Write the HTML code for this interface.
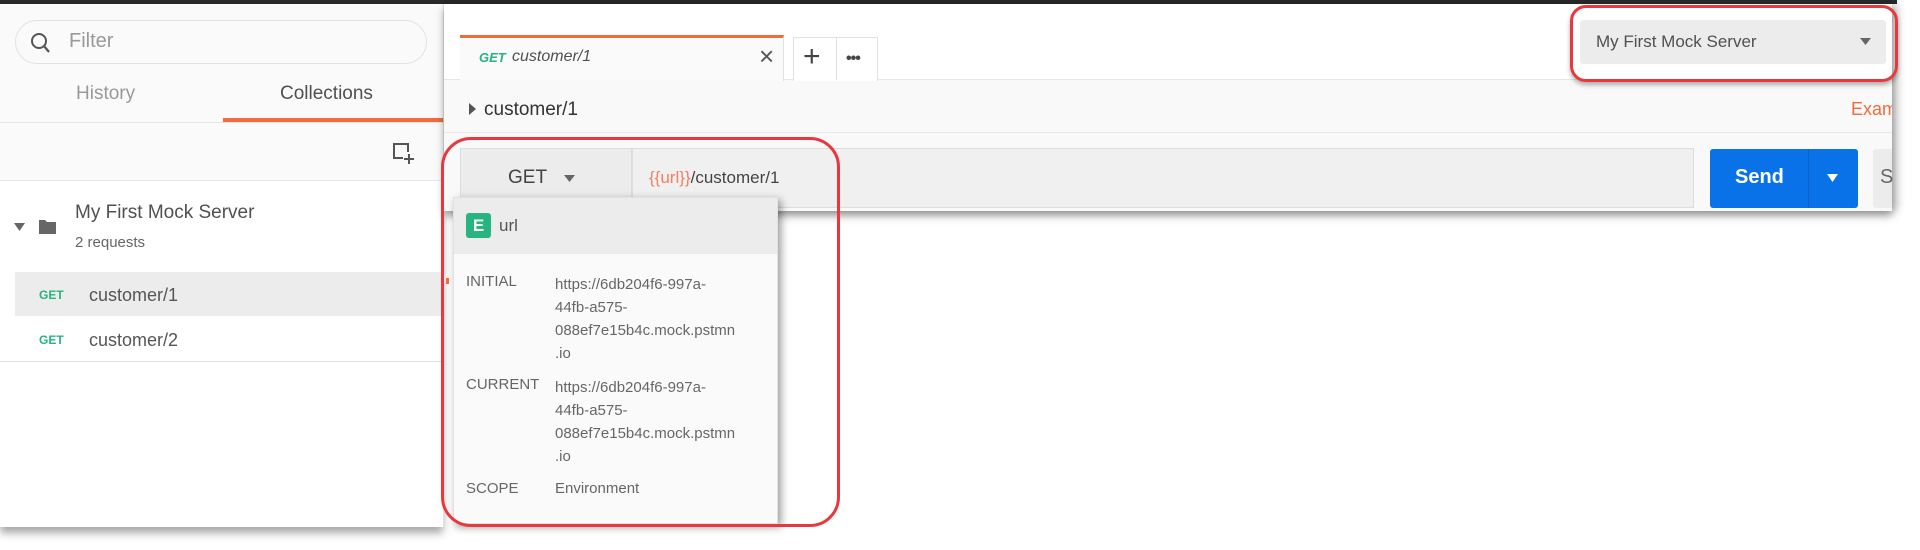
<!DOCTYPE html>
<html><head><meta charset="utf-8"><style>
*{box-sizing:border-box;margin:0;padding:0}
body{width:1920px;height:550px;background:#fff;position:relative;overflow:hidden;font-family:"Liberation Sans",sans-serif;color:#505050}
.a{position:absolute}
</style></head><body>
<div class="a" style="left:0;top:0;width:1897px;height:4px;background:#2a2a2a"></div>
<div class="a" style="left:0;top:4px;width:443px;height:523px;background:#fff;box-shadow:0 6px 8px rgba(0,0,0,.35)"></div>
<div class="a" style="left:0;top:4px;width:443px;height:177px;background:#fafafa;border-bottom:1px solid #e6e6e6"></div>
<div class="a" style="left:443px;top:4px;width:1px;height:523px;background:#e2e2e2"></div>
<div class="a" style="left:15px;top:20px;width:412px;height:44px;border:1px solid #e2e2e2;border-radius:22px;background:#fafafa"></div>
<svg class="a" style="left:30px;top:32px" width="22" height="24" viewBox="0 0 22 24"><circle cx="9" cy="9" r="7" fill="none" stroke="#555" stroke-width="2"/><path d="M14 14l5 6" stroke="#555" stroke-width="2.2"/></svg>
<div class="a" style="left:69px;top:30px;font-size:20px;color:#999">Filter</div>
<div class="a" style="left:76px;top:83px;font-size:19px;color:#999">History</div>
<div class="a" style="left:280px;top:83px;font-size:19px;color:#505050">Collections</div>
<div class="a" style="left:0;top:122px;width:443px;height:1px;background:#e6e6e6"></div>
<div class="a" style="left:223px;top:118px;width:220px;height:4px;background:#f26b3a"></div>
<svg class="a" style="left:392px;top:142px" width="24" height="24" viewBox="0 0 24 24"><path d="M11 16H2V2h14v8" fill="none" stroke="#555" stroke-width="2"/><path d="M17 12v10M12 17h10" stroke="#555" stroke-width="2"/></svg>
<svg class="a" style="left:14px;top:222px" width="12" height="10"><path d="M0 1h11L5.5 9z" fill="#666"/></svg>
<svg class="a" style="left:39px;top:218px" width="18" height="16"><path d="M0 2h6l2 2h9v12H0z" fill="#666"/></svg>
<div class="a" style="left:75px;top:202px;font-size:19px;color:#505050">My First Mock Server</div>
<div class="a" style="left:75px;top:234px;font-size:15px;color:#666">2 requests</div>
<div class="a" style="left:15px;top:272px;width:428px;height:44px;background:#ececec"></div>
<div class="a" style="left:39px;top:288px;font-size:12px;font-weight:bold;color:#26b47f">GET</div>
<div class="a" style="left:89px;top:285px;font-size:18px;color:#555">customer/1</div>
<div class="a" style="left:39px;top:333px;font-size:12px;font-weight:bold;color:#26b47f">GET</div>
<div class="a" style="left:89px;top:330px;font-size:18px;color:#555">customer/2</div>
<div class="a" style="left:0;top:361px;width:443px;height:1px;background:#e2e2e2"></div>
<div class="a" style="left:444px;top:4px;width:1448px;height:207px;background:#f9f9f9;box-shadow:0 5px 8px rgba(0,0,0,.35), 6px 0 8px rgba(0,0,0,.2)"></div>
<div class="a" style="left:444px;top:4px;width:1448px;height:76px;background:#fff;border-bottom:1px solid #e6e6e6"></div>
<div class="a" style="left:460px;top:35px;width:324px;height:46px;background:#fafafa;border-top:3px solid #f26b3a;border-right:1px solid #e2e2e2"></div>
<div class="a" style="left:479px;top:50px;font-size:13px;font-style:italic;font-weight:bold;color:#26b47f">GET</div>
<div class="a" style="left:512px;top:48px;font-size:16px;font-style:italic;color:#505050">customer/1</div>
<div class="a" style="left:759px;top:41px;font-size:26px;color:#555">×</div>
<div class="a" style="left:793px;top:37px;width:85px;height:44px;border:1px solid #e2e2e2;border-bottom:none;background:#fff"></div>
<div class="a" style="left:836px;top:37px;width:1px;height:43px;background:#e2e2e2"></div>
<div class="a" style="left:803px;top:40px;font-size:30px;color:#444;font-weight:300">+</div>
<div class="a" style="left:846px;top:50px;font-size:16px;color:#444;letter-spacing:-1px;font-weight:bold">•••</div>
<svg class="a" style="left:469px;top:103px" width="8" height="12"><path d="M0 0l7 6-7 6z" fill="#555"/></svg>
<div class="a" style="left:484px;top:99px;font-size:19px;color:#333">customer/1</div>
<div class="a" style="left:1851px;top:99px;font-size:18px;color:#f26b3a;width:41px;overflow:hidden;white-space:nowrap">Examples</div>
<div class="a" style="left:444px;top:132px;width:1448px;height:1px;background:#e6e6e6"></div>
<div class="a" style="left:460px;top:148px;width:172px;height:60px;background:#ececec;border:1px solid #ddd"></div>
<div class="a" style="left:508px;top:167px;font-size:19px;color:#444">GET</div>
<svg class="a" style="left:564px;top:175px" width="12" height="8"><path d="M0 0h11L5.5 7z" fill="#666"/></svg>
<div class="a" style="left:632px;top:148px;width:1062px;height:60px;background:#f0f0f0;border:1px solid #ddd"></div>
<div class="a" style="left:649px;top:168px;font-size:17px;color:#444"><span style="color:#f47f5f">{{url}}</span>/customer/1</div>
<div class="a" style="left:1710px;top:149px;width:148px;height:59px;background:#0a72e8;border-radius:3px"></div>
<div class="a" style="left:1808px;top:149px;width:1px;height:59px;background:#0862c8"></div>
<div class="a" style="left:1735px;top:166px;font-size:20px;font-weight:bold;color:#fff">Send</div>
<svg class="a" style="left:1827px;top:174px" width="12" height="9"><path d="M0 0h11L5.5 8z" fill="#fff"/></svg>
<div class="a" style="left:1873px;top:149px;width:19px;height:59px;background:#ececec;border-radius:3px 0 0 3px"></div>
<div class="a" style="left:1880px;top:166px;font-size:20px;color:#666">S</div>
<div class="a" style="left:1580px;top:20px;width:306px;height:44px;background:#ececec;border-radius:3px"></div>
<div class="a" style="left:1596px;top:32px;font-size:17px;color:#505050">My First Mock Server</div>
<svg class="a" style="left:1860px;top:38px" width="12" height="8"><path d="M0 0h11L5.5 7z" fill="#666"/></svg>
<div class="a" style="left:1570px;top:5px;width:328px;height:77px;border:3px solid #e8383d;border-radius:16px;box-shadow:0 3px 5px rgba(0,0,0,.3)"></div>
<div class="a" style="left:453px;top:197px;width:325px;height:327px;background:#fafafa;border:1px solid #e2e2e2;box-shadow:3px 3px 8px rgba(0,0,0,.4)"></div>
<div class="a" style="left:454px;top:198px;width:323px;height:56px;background:#ececec"></div>
<div class="a" style="left:466px;top:213px;width:25px;height:25px;background:#26b47f;border-radius:3px;color:#fff;font-weight:bold;font-size:17px;text-align:center;line-height:25px">E</div>
<div class="a" style="left:499px;top:216px;font-size:17px;color:#555">url</div>
<div class="a" style="left:466px;top:273px;font-size:15px;color:#666">INITIAL</div>
<div class="a" style="left:555px;top:273px;font-size:15px;color:#666;line-height:23px">https://6db204f6-997a-<br>44fb-a575-<br>088ef7e15b4c.mock.pstmn<br>.io</div>
<div class="a" style="left:466px;top:376px;font-size:15px;color:#666">CURRENT</div>
<div class="a" style="left:555px;top:376px;font-size:15px;color:#666;line-height:23px">https://6db204f6-997a-<br>44fb-a575-<br>088ef7e15b4c.mock.pstmn<br>.io</div>
<div class="a" style="left:466px;top:480px;font-size:15px;color:#666">SCOPE</div>
<div class="a" style="left:555px;top:480px;font-size:15px;color:#666">Environment</div>
<div class="a" style="left:446px;top:278px;width:3px;height:6px;background:#f26b3a"></div>
<div class="a" style="left:441px;top:137px;width:399px;height:390px;border:3px solid #e8383d;border-radius:30px"></div>
</body></html>
